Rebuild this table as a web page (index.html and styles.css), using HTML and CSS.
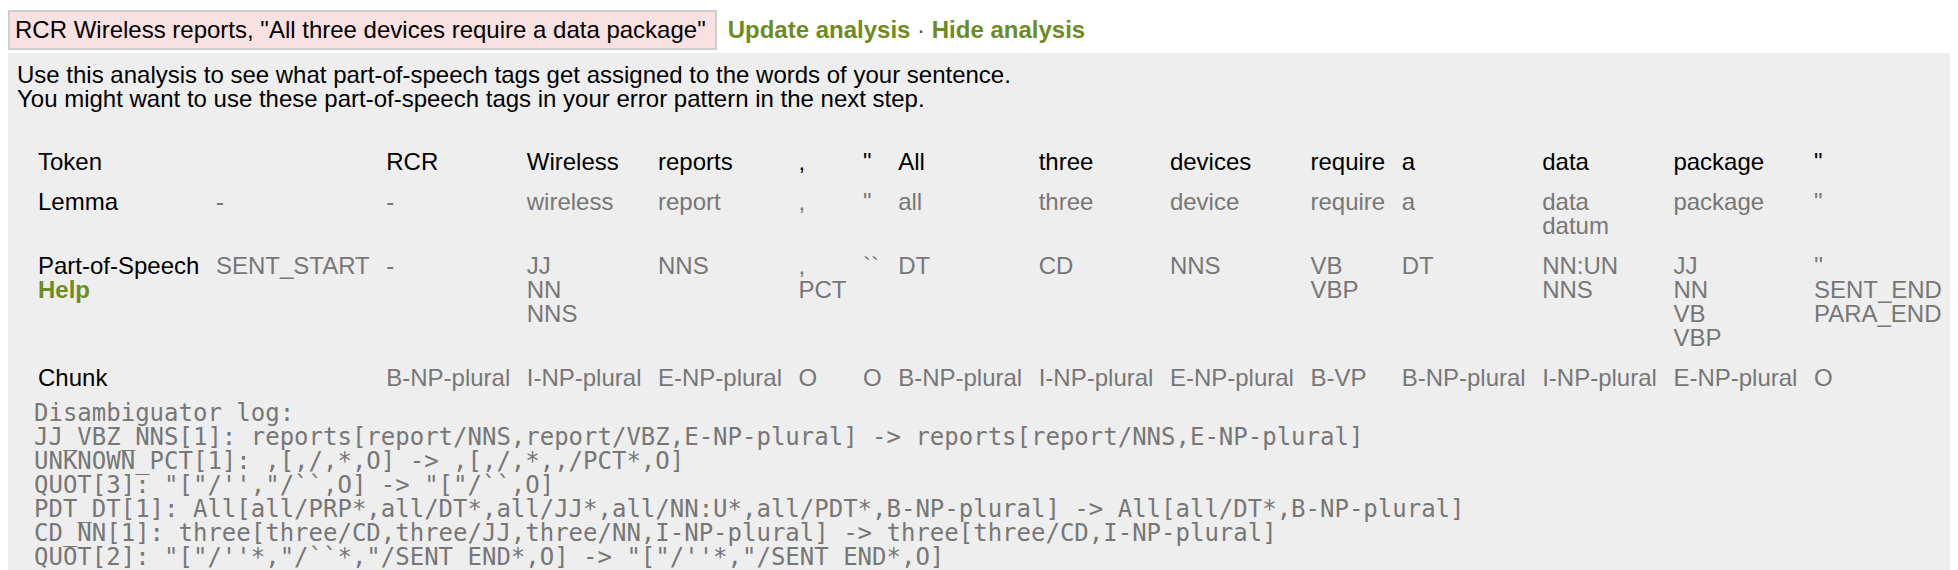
FILE: index.html
```html
<!DOCTYPE html>
<html>
<head>
<meta charset="utf-8">
<link rel="stylesheet" href="styles.css">
</head>
<body>
<div class="prev"><a class="link">Strategy</a></div>
<div class="sentence-row">
  <span class="sentence">RCR Wireless reports, "All three devices require a data package"</span>
  <span class="actions"><a class="link">Update analysis</a><span class="sep"> · </span><a class="link">Hide analysis</a></span>
</div>
<div class="panel">
  <div class="intro">Use this analysis to see what part-of-speech tags get assigned to the words of your sentence.<br>You might want to use these part-of-speech tags in your error pattern in the next step.</div>
  <table class="analysis">
    <tr class="tokens">
      <td class="label">Token</td><td></td><td>RCR</td><td>Wireless</td><td>reports</td><td>,</td><td>"</td><td>All</td><td>three</td><td>devices</td><td>require</td><td>a</td><td>data</td><td>package</td><td>"</td>
    </tr>
    <tr>
      <td class="label">Lemma</td><td>-</td><td>-</td><td>wireless</td><td>report</td><td>,</td><td>"</td><td>all</td><td>three</td><td>device</td><td>require</td><td>a</td><td>data<br>datum</td><td>package</td><td>"</td>
    </tr>
    <tr>
      <td class="label">Part-of-Speech<br><a class="link">Help</a></td><td>SENT_START</td><td>-</td><td>JJ<br>NN<br>NNS</td><td>NNS</td><td>,<br>PCT</td><td>``</td><td>DT</td><td>CD</td><td>NNS</td><td>VB<br>VBP</td><td>DT</td><td>NN:UN<br>NNS</td><td>JJ<br>NN<br>VB<br>VBP</td><td>''<br>SENT_END<br>PARA_END</td>
    </tr>
    <tr>
      <td class="label">Chunk</td><td></td><td>B-NP-plural</td><td>I-NP-plural</td><td>E-NP-plural</td><td>O</td><td>O</td><td>B-NP-plural</td><td>I-NP-plural</td><td>E-NP-plural</td><td>B-VP</td><td>B-NP-plural</td><td>I-NP-plural</td><td>E-NP-plural</td><td>O</td>
    </tr>
  </table>
  <pre class="log">Disambiguator log:
JJ_VBZ_NNS[1]: reports[report/NNS,report/VBZ,E-NP-plural] -&gt; reports[report/NNS,E-NP-plural]
UNKNOWN_PCT[1]: ,[,/,*,O] -&gt; ,[,/,*,,/PCT*,O]
QUOT[3]: "["/'',"/``,O] -&gt; "["/``,O]
PDT_DT[1]: All[all/PRP*,all/DT*,all/JJ*,all/NN:U*,all/PDT*,B-NP-plural] -&gt; All[all/DT*,B-NP-plural]
CD_NN[1]: three[three/CD,three/JJ,three/NN,I-NP-plural] -&gt; three[three/CD,I-NP-plural]
QUOT[2]: "["/''*,"/``*,"/SENT_END*,O] -&gt; "["/''*,"/SENT_END*,O]
</pre>
</div>
</body>
</html>
```
FILE: styles.css
```css
html, body {
  margin: 0;
  padding: 0;
  background: #fff;
}
body {
  margin: 8px;
  font-family: "Liberation Sans", Arial, sans-serif;
  font-size: 24px;
  line-height: 24px;
  color: #000;
  overflow: hidden;
}
.link {
  color: #6e8b22;
  font-weight: bold;
  text-decoration: none;
}
.prev {
  margin-top: -27px;
  padding-left: 90px;
  height: 24px;
}
.sentence-row {
  display: flex;
  align-items: center;
  margin-top: 5px;
}
.sentence {
  display: inline-block;
  background: #f9e1e1;
  border: 2px solid #cfcfcf;
  padding: 6px 9px 6px 5px;
}
.actions {
  margin-left: 11px;
}
.sep {
  color: #555;
}
.panel {
  margin-top: 3px;
  background: #eeeeee;
  padding: 10px 9px 10px 9px;
  width: max-content;
  min-width: 100%;
}
.intro {
  color: #000;
}
.analysis {
  border-collapse: collapse;
  margin-top: 31px;
  margin-left: 21px;
}
.analysis td {
  padding: 8px 16.5px 8px 0;
  vertical-align: top;
  color: #777;
  white-space: nowrap;
}
.analysis td.label {
  color: #000;
}
.analysis tr.tokens td {
  color: #000;
}
.log {
  margin: 3px 0 0 17px;
  font-family: "DejaVu Sans Mono", monospace;
  font-size: 24px;
  line-height: 24px;
  color: #777;
}
```
